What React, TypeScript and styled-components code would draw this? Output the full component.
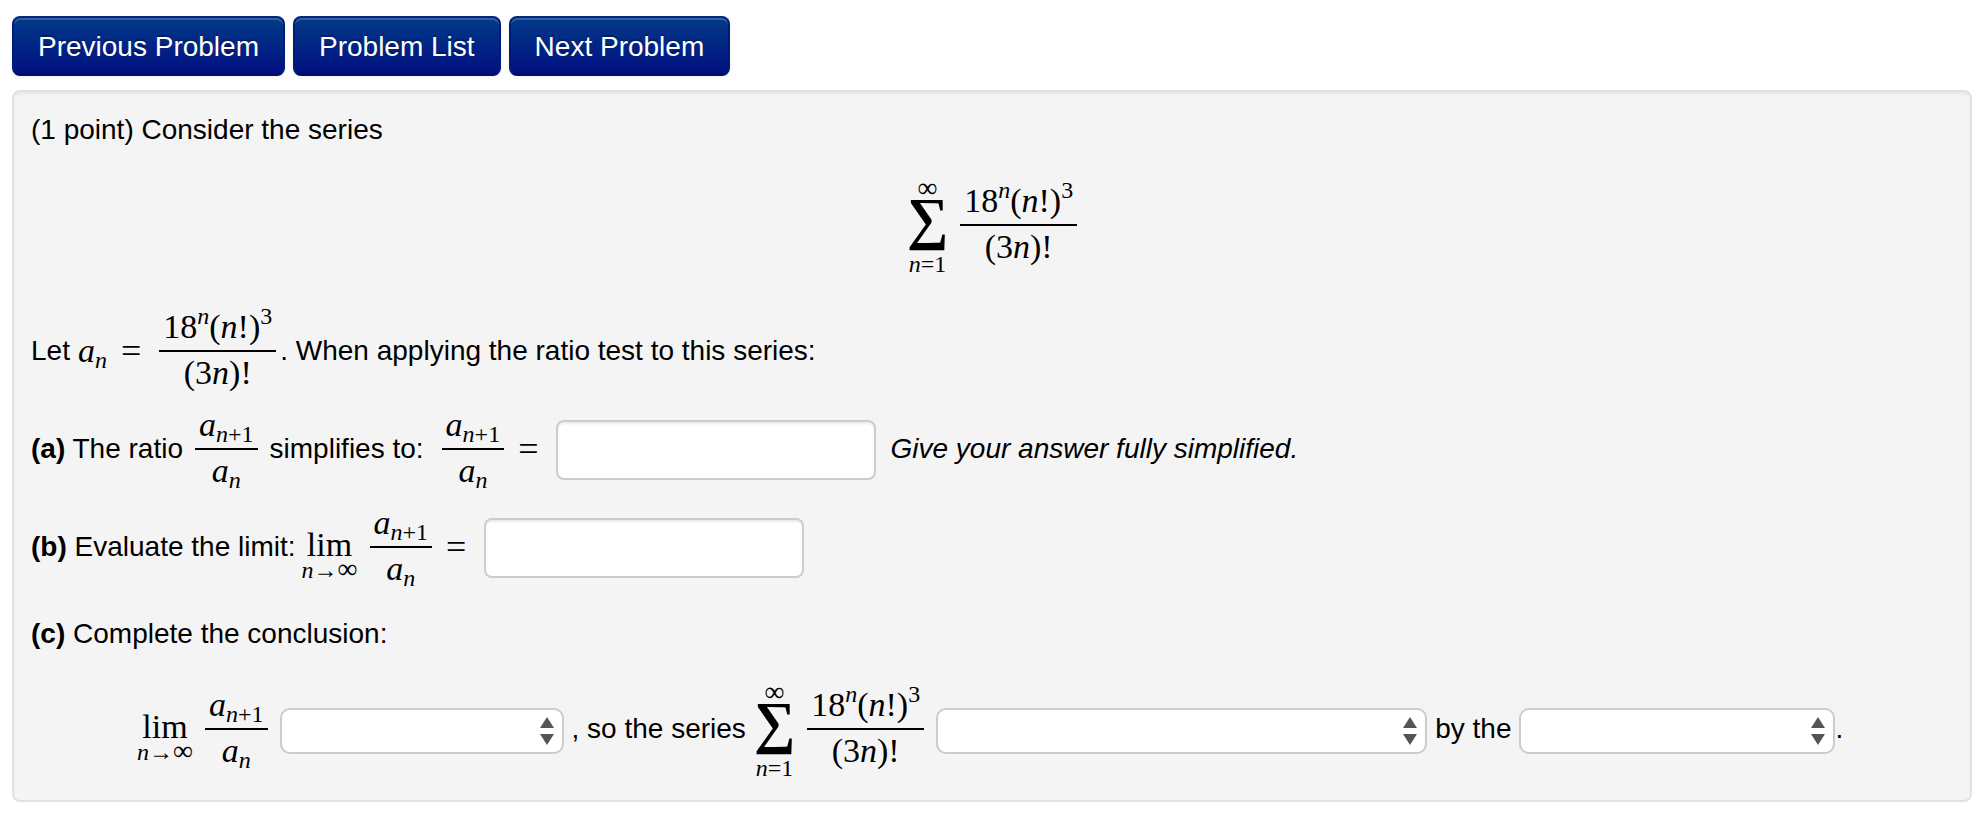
import React, { useId, useState } from "react";
import styled, { createGlobalStyle } from "styled-components";

const GlobalStyle = createGlobalStyle`
  *, *::before, *::after { box-sizing: border-box; }
  body {
    margin: 0;
    background: #fff;
    color: #000;
    font-family: "Liberation Sans", Arial, Helvetica, sans-serif;
    font-size: 28px;
    line-height: 40px;
  }
`;

const Page = styled.main`
  padding: 16px 16px 32px 12px;
`;

const Toolbar = styled.nav`
  display: flex;
  flex-wrap: wrap;
  gap: 8px;
  margin-bottom: 14px;
`;

const NavButton = styled.button`
  height: 60px;
  padding: 2px 24px 0;
  border: 2px solid;
  border-color: #02297c #021a78 #020e62;
  border-radius: 8px;
  background: linear-gradient(#023a88, #010f80);
  box-shadow: inset 0 2px 0 rgba(255, 255, 255, 0.2), 0 2px 4px rgba(0, 0, 0, 0.05);
  color: #fff;
  font: inherit;
  text-shadow: 0 -2px 0 rgba(0, 0, 0, 0.25);
  cursor: pointer;
`;

const Panel = styled.section`
  padding: 18px 17px 20px;
  border: 2px solid #e1e1e1;
  border-radius: 8px;
  background: #f4f4f4;
  box-shadow: inset 0 2px 2px rgba(0, 0, 0, 0.05);
`;

const Line = styled.p`
  margin: 0;
`;

const Row = styled.div<{ $top?: number; $indent?: number; $center?: boolean }>`
  display: flex;
  flex-wrap: wrap;
  align-items: center;
  justify-content: ${(p) => (p.$center ? "center" : "flex-start")};
  margin-top: ${(p) => p.$top ?? 4}px;
  padding-left: ${(p) => p.$indent ?? 0}px;
`;

const Caption = styled.label`
  display: flex;
  align-items: center;
  white-space: nowrap;
`;

const Text = styled.span<{ $before?: number; $after?: number }>`
  margin-left: ${(p) => p.$before ?? 0}px;
  margin-right: ${(p) => p.$after ?? 0}px;
  white-space: nowrap;
`;

const Hint = styled.em`
  margin-left: 14px;
`;

const MathText = styled.span`
  font-family: "Liberation Serif", "Times New Roman", serif;
  font-size: 34px;
  white-space: nowrap;

  sub, sup {
    font-size: 24px;
    line-height: 0;
  }
  sub { vertical-align: -6px; }
  sup { vertical-align: 14px; }
`;

const Equals = styled(MathText)`
  margin: 0 18px 0 14px;
  font-size: 36px;
`;

const Fraction = styled(MathText)`
  display: inline-flex;
  flex-direction: column;
  text-align: center;
`;

const Numerator = styled.span`
  padding: 0 4px;
  border-bottom: 2px solid #000;
  line-height: 46px;
`;

const Denominator = styled.span`
  padding-bottom: 4px;
  line-height: 42px;
`;

const Operator = styled(MathText)`
  display: inline-flex;
  flex-direction: column;
  align-items: center;
`;

const UpperBound = styled.span`
  font-size: 28px;
  line-height: 28px;
`;

const LowerBound = styled.span`
  font-size: 24px;
  line-height: 24px;
`;

const Infinity = styled.span`
  font-size: 28px;
  line-height: 0;
`;

const Sigma = styled.span`
  padding-bottom: 16px;
  font-size: 58px;
  font-weight: bold;
  line-height: 34px;
`;

const Lim = styled.span`
  padding-top: 20px;
  line-height: 26px;
`;

const Term = styled.span`
  display: inline-flex;
  align-items: center;
  gap: 12px;
`;

const Answer = styled.input`
  width: 320px;
  height: 60px;
  margin-top: 2px;
  padding: 8px 12px;
  border: 2px solid #ccc;
  border-radius: 8px;
  background: #fff;
  box-shadow: inset 0 2px 2px rgba(0, 0, 0, 0.075);
  font: inherit;
`;

const SelectBox = styled.span<{ $width: number; $before?: number }>`
  position: relative;
  display: inline-flex;
  width: ${(p) => p.$width}px;
  height: 46px;
  margin-top: 4px;
  margin-left: ${(p) => p.$before ?? 0}px;
`;

const Select = styled.select`
  appearance: none;
  width: 100%;
  height: 100%;
  padding: 0 44px 0 12px;
  border: 2px solid #ccc;
  border-radius: 10px;
  background: #fff;
  color: #000;
  font: inherit;
  font-size: 24px;
`;

const Arrows = styled.svg`
  position: absolute;
  top: 9px;
  right: 10px;
  pointer-events: none;
`;

const V = ({ children }: { children: React.ReactNode }) => <i>{children}</i>;

const SeriesTerm = () => (
  <Fraction>
    <Numerator>
      18<sup><V>n</V></sup>(<V>n</V>!)<sup>3</sup>
    </Numerator>
    <Denominator>(3<V>n</V>)!</Denominator>
  </Fraction>
);

const Ratio = () => (
  <Fraction>
    <Numerator>
      <V>a</V><sub><V>n</V>+1</sub>
    </Numerator>
    <Denominator>
      <V>a</V><sub><V>n</V></sub>
    </Denominator>
  </Fraction>
);

const Series = () => (
  <Term>
    <Operator>
      <UpperBound>∞</UpperBound>
      <Sigma>∑</Sigma>
      <LowerBound><V>n</V>=1</LowerBound>
    </Operator>
    <SeriesTerm />
  </Term>
);

const LimitRatio = () => (
  <Term>
    <Operator>
      <Lim>lim</Lim>
      <LowerBound><V>n</V>→<Infinity>∞</Infinity></LowerBound>
    </Operator>
    <Ratio />
  </Term>
);

const Choice = ({ label, width, before }: { label: string; width: number; before?: number }) => (
  <SelectBox $width={width} $before={before}>
    <Select aria-label={label} defaultValue="">
      <option value="" />
    </Select>
    <Arrows width="14" height="28" viewBox="0 0 14 28" fill="#555" aria-hidden="true">
      <path d="M7 0 14 11H0Z" />
      <path d="M0 17H14L7 28Z" />
    </Arrows>
  </SelectBox>
);

export default function App() {
  const ratioId = useId();
  const limitId = useId();
  const [ratio, setRatio] = useState("");
  const [limit, setLimit] = useState("");

  return (
    <>
      <GlobalStyle />
      <Page>
        <Toolbar>
          <NavButton type="button">Previous Problem</NavButton>
          <NavButton type="button">Problem List</NavButton>
          <NavButton type="button">Next Problem</NavButton>
        </Toolbar>
        <Panel>
          <Line>(1 point) Consider the series</Line>
          <Row $top={24} $center>
            <Series />
          </Row>
          <Row $top={28}>
            <Text $after={8}>Let</Text>
            <MathText><V>a</V><sub><V>n</V></sub></MathText>
            <Equals>=</Equals>
            <SeriesTerm />
            <Text $before={4}>. When applying the ratio test to this series:</Text>
          </Row>
          <Row>
            <Caption htmlFor={ratioId}>
              <Text $after={12}><b>(a)</b> The ratio</Text>
              <Ratio />
              <Text $before={12} $after={18}>simplifies to:</Text>
              <Ratio />
              <Equals>=</Equals>
            </Caption>
            <Answer id={ratioId} value={ratio} onChange={(e) => setRatio(e.target.value)} />
            <Hint>Give your answer fully simplified.</Hint>
          </Row>
          <Row>
            <Caption htmlFor={limitId}>
              <Text $after={6}><b>(b)</b> Evaluate the limit:</Text>
              <LimitRatio />
              <Equals>=</Equals>
            </Caption>
            <Answer id={limitId} value={limit} onChange={(e) => setLimit(e.target.value)} />
          </Row>
          <Row $top={20}>
            <Text><b>(c)</b> Complete the conclusion:</Text>
          </Row>
          <Row $top={24} $indent={106}>
            <LimitRatio />
            <Choice label="Value of the limit" width={284} before={12} />
            <Text $before={8} $after={8}>, so the series</Text>
            <Series />
            <Choice label="Behaviour of the series" width={491} before={12} />
            <Text $before={8} $after={8}>by the</Text>
            <Choice label="Test used" width={316} />
            <Text>.</Text>
          </Row>
        </Panel>
      </Page>
    </>
  );
}
